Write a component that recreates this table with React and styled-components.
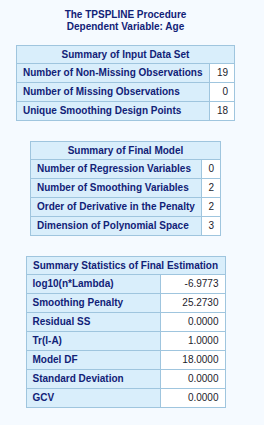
import React from "react";
import styled, { createGlobalStyle } from "styled-components";

const GlobalStyle = createGlobalStyle`
  html, body {
    margin: 0;
    padding: 0;
    background: #f5faff;
  }
  body {
    font-family: "Liberation Sans", Arial, sans-serif;
  }
`;

const Page = styled.div`
  width: 235px;
  padding: 9px 0 16px 8px;
  display: flex;
  flex-direction: column;
  align-items: center;
  gap: 20px;
`;

const Title = styled.div`
  display: flex;
  flex-direction: column;
  align-items: center;
  font-size: 10px;
  line-height: 12px;
  font-weight: bold;
  color: #112277;
  margin-bottom: -8px;
`;

const Table = styled.table`
  width: ${(p) => p.$width}px;
  border-collapse: separate;
  border-spacing: 0;
  border-top: 1px solid #9fc5de;
  border-left: 1px solid #9fc5de;
  font-size: 10px;
`;

const HeadCell = styled.th`
  background: #d9eefb;
  color: #112277;
  font-weight: bold;
  text-align: center;
  padding: 0 6px;
  line-height: 17px;
  height: 17px;
  border-right: 1px solid #9fc5de;
  border-bottom: 1px solid #9fc5de;
  white-space: nowrap;
`;

const LabelCell = styled.th`
  background: #d9eefb;
  color: #112277;
  font-weight: bold;
  text-align: left;
  padding: 0 6px;
  line-height: 18px;
  height: 18px;
  border-right: 1px solid #9fc5de;
  border-bottom: 1px solid #9fc5de;
  white-space: nowrap;
`;

const ValueCell = styled.td`
  background: #ffffff;
  color: #1c1c2c;
  text-align: right;
  padding: 0 6px;
  line-height: 18px;
  height: 18px;
  width: ${(p) => p.$width - 13}px;
  border-right: 1px solid #9fc5de;
  border-bottom: 1px solid #9fc5de;
  white-space: nowrap;
`;

function SummaryTable({ title, rows, width, valueWidth }) {
  return (
    <Table $width={width}>
      <thead>
        <tr>
          <HeadCell colSpan={2}>{title}</HeadCell>
        </tr>
      </thead>
      <tbody>
        {rows.map(([label, value]) => (
          <tr key={label}>
            <LabelCell scope="row">{label}</LabelCell>
            <ValueCell $width={valueWidth}>{value}</ValueCell>
          </tr>
        ))}
      </tbody>
    </Table>
  );
}

const input = [
  ["Number of Non-Missing Observations", "19"],
  ["Number of Missing Observations", "0"],
  ["Unique Smoothing Design Points", "18"],
];

const model = [
  ["Number of Regression Variables", "0"],
  ["Number of Smoothing Variables", "2"],
  ["Order of Derivative in the Penalty", "2"],
  ["Dimension of Polynomial Space", "3"],
];

const stats = [
  ["log10(n*Lambda)", "-6.9773"],
  ["Smoothing Penalty", "25.2730"],
  ["Residual SS", "0.0000"],
  ["Tr(I-A)", "1.0000"],
  ["Model DF", "18.0000"],
  ["Standard Deviation", "0.0000"],
  ["GCV", "0.0000"],
];

export default function App() {
  return (
    <>
      <GlobalStyle />
      <Page>
        <Title>
          <span>The TPSPLINE Procedure</span>
          <span>Dependent Variable: Age</span>
        </Title>
        <SummaryTable
          title="Summary of Input Data Set"
          rows={input}
          width={219}
          valueWidth={25}
        />
        <SummaryTable
          title="Summary of Final Model"
          rows={model}
          width={191}
          valueWidth={19}
        />
        <SummaryTable
          title="Summary Statistics of Final Estimation"
          rows={stats}
          width={200}
          valueWidth={65}
        />
      </Page>
    </>
  );
}
